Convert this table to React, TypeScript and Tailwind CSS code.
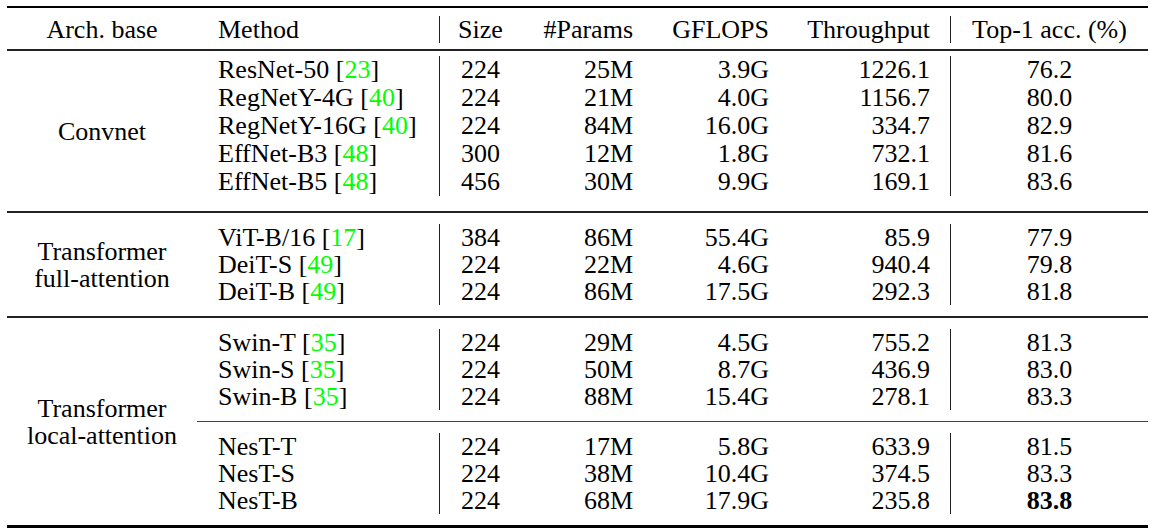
import React from 'react';

type Row = {
  method: string;
  cite?: string;
  size: string;
  params: string;
  gflops: string;
  throughput: string;
  top1: string;
  best?: boolean;
};

type Group = {
  label: string[];
  parts: Row[][];
  tall?: boolean;
};

const groups: Group[] = [
  {
    label: ['Convnet'],
    tall: true,
    parts: [
      [
        { method: 'ResNet-50', cite: '23', size: '224', params: '25M', gflops: '3.9G', throughput: '1226.1', top1: '76.2' },
        { method: 'RegNetY-4G', cite: '40', size: '224', params: '21M', gflops: '4.0G', throughput: '1156.7', top1: '80.0' },
        { method: 'RegNetY-16G', cite: '40', size: '224', params: '84M', gflops: '16.0G', throughput: '334.7', top1: '82.9' },
        { method: 'EffNet-B3', cite: '48', size: '300', params: '12M', gflops: '1.8G', throughput: '732.1', top1: '81.6' },
        { method: 'EffNet-B5', cite: '48', size: '456', params: '30M', gflops: '9.9G', throughput: '169.1', top1: '83.6' },
      ],
    ],
  },
  {
    label: ['Transformer', 'full-attention'],
    parts: [
      [
        { method: 'ViT-B/16', cite: '17', size: '384', params: '86M', gflops: '55.4G', throughput: '85.9', top1: '77.9' },
        { method: 'DeiT-S', cite: '49', size: '224', params: '22M', gflops: '4.6G', throughput: '940.4', top1: '79.8' },
        { method: 'DeiT-B', cite: '49', size: '224', params: '86M', gflops: '17.5G', throughput: '292.3', top1: '81.8' },
      ],
    ],
  },
  {
    label: ['Transformer', 'local-attention'],
    parts: [
      [
        { method: 'Swin-T', cite: '35', size: '224', params: '29M', gflops: '4.5G', throughput: '755.2', top1: '81.3' },
        { method: 'Swin-S', cite: '35', size: '224', params: '50M', gflops: '8.7G', throughput: '436.9', top1: '83.0' },
        { method: 'Swin-B', cite: '35', size: '224', params: '88M', gflops: '15.4G', throughput: '278.1', top1: '83.3' },
      ],
      [
        { method: 'NesT-T', size: '224', params: '17M', gflops: '5.8G', throughput: '633.9', top1: '81.5' },
        { method: 'NesT-S', size: '224', params: '38M', gflops: '10.4G', throughput: '374.5', top1: '83.3' },
        { method: 'NesT-B', size: '224', params: '68M', gflops: '17.9G', throughput: '235.8', top1: '83.8', best: true },
      ],
    ],
  },
];

const grid = 'grid grid-cols-[242px_82px_112px_136px_161px_20px_198px]';

const Cells = ({ row, tall }: { row: Row; tall?: boolean }) => (
  <div className={`${grid} ${tall ? 'h-[28px] leading-[28px]' : 'h-[27px] leading-[27px]'}`}>
    <div className="pl-[21px] whitespace-nowrap">
      {row.method}
      {row.cite && (
        <>
          {' '}[<span className="text-[#00ff00]">{row.cite}</span>]
        </>
      )}
    </div>
    <div className="border-l border-[#222] text-center">{row.size}</div>
    <div className="text-right">{row.params}</div>
    <div className="text-right">{row.gflops}</div>
    <div className="text-right">{row.throughput}</div>
    <div />
    <div className={`border-l border-[#222] text-center ${row.best ? 'font-bold' : ''}`}>{row.top1}</div>
  </div>
);

const Rule = ({ className }: { className: string }) => <div className={className} />;

export default function App() {
  return (
    <div className="w-[1156px] h-[532px] overflow-hidden bg-white text-black font-['Liberation_Serif','Times_New_Roman',serif] text-[26px]">
      <div className="ml-[7px] w-[1141px] pt-[6px]">
        <Rule className="h-[2px] bg-black" />

        {/* header */}
        <div className="flex pt-[8px] pb-[6px]">
          <div className="w-[190px] text-center leading-[27px]">Arch. base</div>
          <div className={`${grid} h-[27px] leading-[27px]`}>
            <div className="pl-[21px]">Method</div>
            <div className="border-l border-[#222] text-center">Size</div>
            <div className="text-right">#Params</div>
            <div className="text-right">GFLOPS</div>
            <div className="text-right">Throughput</div>
            <div />
            <div className="border-l border-[#222] text-center">Top-1 acc. (%)</div>
          </div>
        </div>
        <Rule className="h-[2px] bg-[#222]" />

        {groups.map((g, gi) => (
          <div key={gi}>
            <div className="flex">
              <div className="w-[190px] flex flex-col items-center justify-center text-center leading-[27px]">
                {g.label.map((l) => (
                  <div key={l}>{l}</div>
                ))}
              </div>
              <div className="flex flex-col">
                {g.parts.map((part, pi) => (
                  <div key={pi}>
                    {pi > 0 && <Rule className="h-px bg-[#444]" />}
                    <div className={g.tall ? 'pt-[5px] pb-[15px]' : 'py-[11px]'}>
                      {part.map((row) => (
                        <Cells key={row.method} row={row} tall={g.tall} />
                      ))}
                    </div>
                  </div>
                ))}
              </div>
            </div>
            {gi < groups.length - 1 ? (
              <Rule className="h-[2px] bg-[#222]" />
            ) : (
              <Rule className="h-[3px] bg-black" />
            )}
          </div>
        ))}
      </div>
    </div>
  );
}
